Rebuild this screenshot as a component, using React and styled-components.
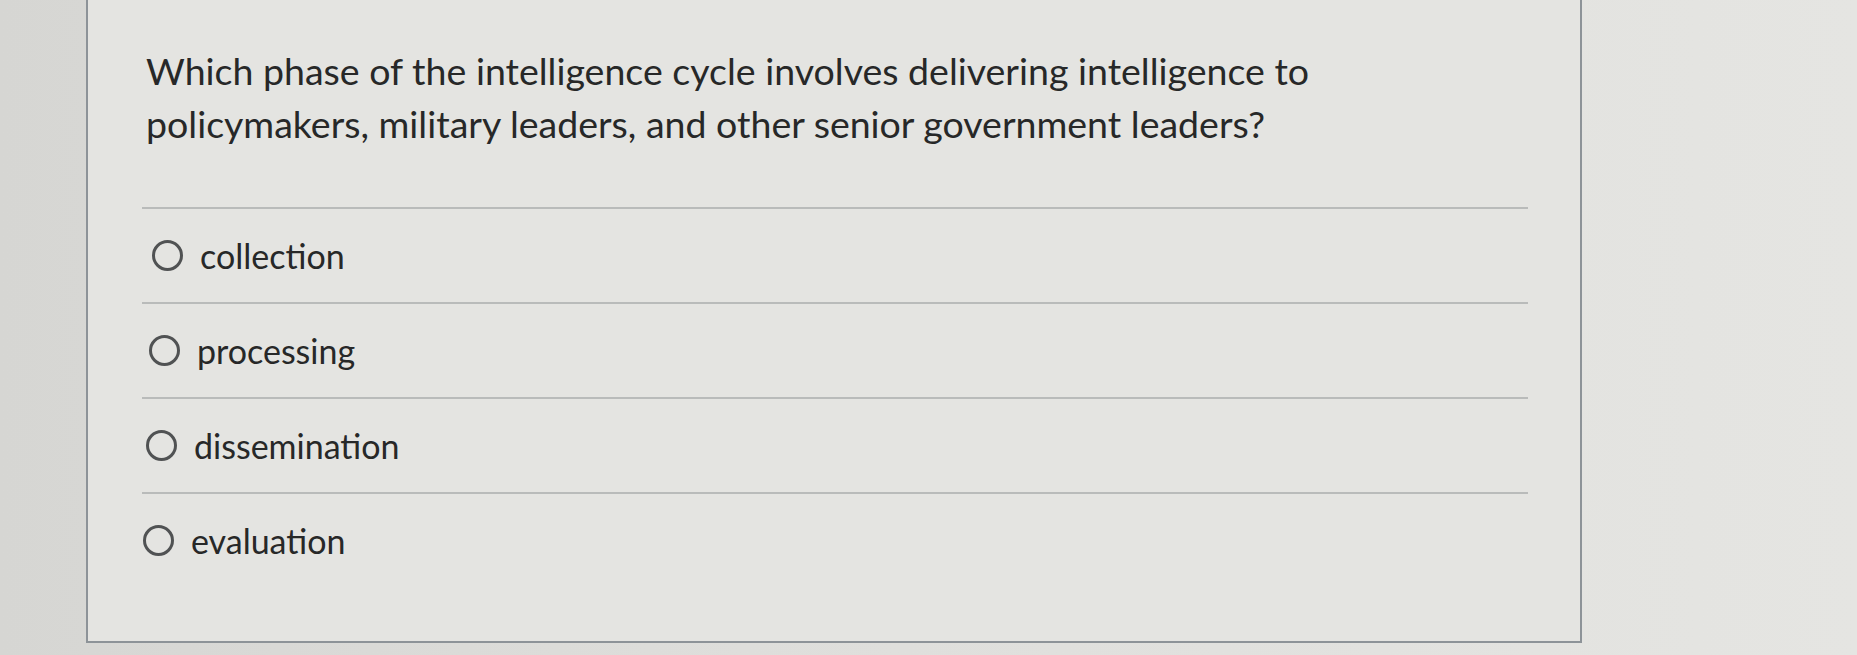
import styled, { createGlobalStyle } from "styled-components";

const GlobalStyle = createGlobalStyle`
  html, body {
    margin: 0;
    padding: 0;
  }
  body {
    width: 1857px;
    height: 655px;
    overflow: hidden;
    background: linear-gradient(90deg, #d6d6d3 0%, #dededb 40%, #e5e5e2 100%);
    font-family: Lato, "Open Sans", sans-serif;
  }
`;

const Page = styled.div`
  box-sizing: border-box;
  height: 655px;
  padding: 0 0 12px 86px;
`;

const Card = styled.div`
  box-sizing: border-box;
  width: 1496px;
  height: 643px;
  padding: 44px 52px 0 54px;
  background-color: #e4e4e1;
  border: 2px solid #8d9398;
  border-top: none;
`;

const Question = styled.p`
  margin: 0 0 57px 0;
  padding-left: 4px;
  font-size: 37.5px;
  line-height: 53px;
  color: #272828;
`;

const Options = styled.div`
  display: flex;
  flex-direction: column;
`;

const Option = styled.label`
  display: flex;
  align-items: center;
  gap: 17px;
  height: 93px;
  padding-left: ${(props) => props.indent}px;
  border-top: 2px solid #b9bbba;
  font-size: 34px;
  color: #272828;
`;

const Radio = styled.span`
  box-sizing: border-box;
  width: 31px;
  height: 31px;
  border-radius: 50%;
  border: 3px solid #505253;
  flex-shrink: 0;
`;

const choices = [
  { label: "collection", indent: 10 },
  { label: "processing", indent: 7 },
  { label: "dissemination", indent: 4 },
  { label: "evaluation", indent: 1 },
];

export default function App() {
  return (
    <>
      <GlobalStyle />
      <Page>
        <Card>
          <Question>
            Which phase of the intelligence cycle involves delivering intelligence to
            <br />
            policymakers, military leaders, and other senior government leaders?
          </Question>
          <Options>
            {choices.map((c) => (
              <Option key={c.label} indent={c.indent}>
                <Radio />
                {c.label}
              </Option>
            ))}
          </Options>
        </Card>
      </Page>
    </>
  );
}
